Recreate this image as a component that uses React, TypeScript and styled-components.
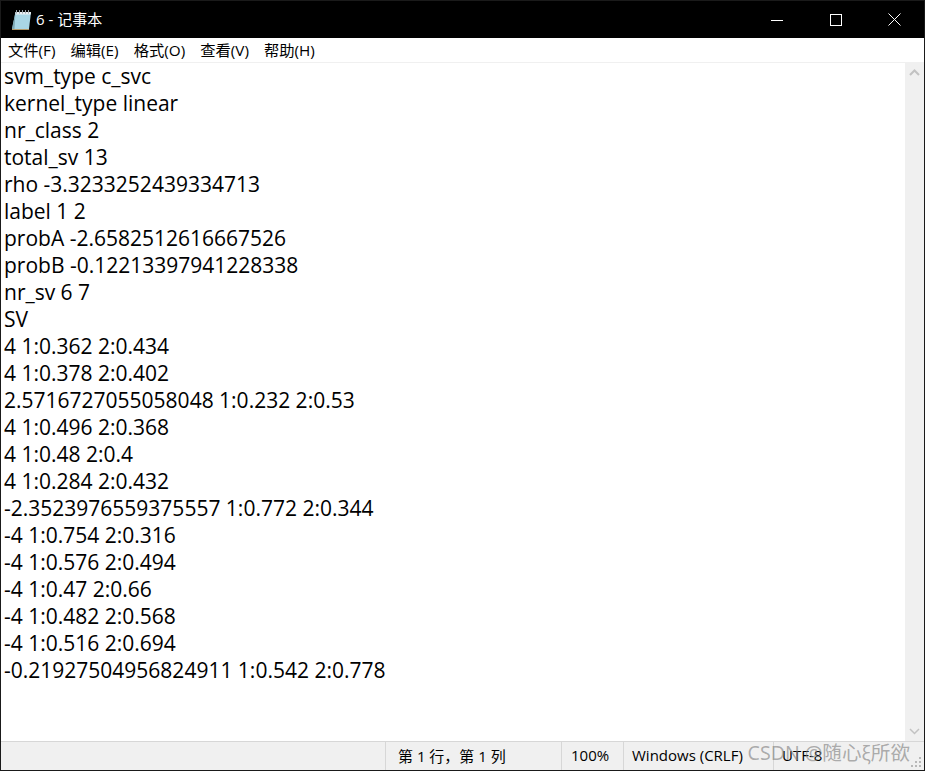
import { createGlobalStyle } from 'styled-components';
import styled from 'styled-components';

const GlobalStyle = createGlobalStyle`
  html, body {
    margin: 0;
    padding: 0;
    background: #fff;
  }
  #root {
    height: 771px;
  }
`;

const Win = styled.div`
  width: 925px;
  height: 771px;
  box-sizing: border-box;
  border: 1px solid #1a1a1a;
  display: flex;
  flex-direction: column;
  position: relative;
  overflow: hidden;
  font-family: "Open Sans", "Noto Sans CJK SC", sans-serif;
  color: #000;
`;

const TitleBar = styled.div`
  height: 37px;
  flex: none;
  background: #000;
  display: flex;
  align-items: center;
  padding-left: 10px;
  color: #fff;
  font-size: 15px;
`;

const TitleText = styled.span`
  margin-left: 4px;
  margin-top: -2px;
  flex: 1;
`;

const WinBtn = styled.div`
  width: 59px;
  height: 37px;
  display: flex;
  align-items: center;
  justify-content: center;
`;

const MenuBar = styled.div`
  height: 24px;
  flex: none;
  background: #fff;
  display: flex;
  align-items: center;
  padding-left: 7px;
  gap: 15px;
  font-size: 15.3px;
  border-bottom: 1px solid #f0f0f0;
`;

const MenuItem = styled.span`
  white-space: nowrap;
  margin-top: -2px;
`;

const Middle = styled.div`
  flex: 1;
  display: flex;
  min-height: 0;
`;

const TextArea = styled.div`
  flex: 1;
  padding: 0 0 0 3px;
  font-size: 21px;
  line-height: 27px;
  white-space: pre;
`;

const ScrollBar = styled.div`
  width: 19px;
  flex: none;
  background: #f0f0f0;
  display: flex;
  flex-direction: column;
  justify-content: space-between;
  align-items: center;
  padding: 6px 0;
  box-sizing: border-box;
`;

const StatusBar = styled.div`
  height: 29px;
  flex: none;
  box-sizing: border-box;
  background: #f0f0f0;
  border-top: 1px solid #d7d7d7;
  display: flex;
  justify-content: flex-end;
  font-size: 15px;
`;

const Pane = styled.div<{ $w: number; $pad: number }>`
  width: ${p => p.$w}px;
  box-sizing: border-box;
  border-left: 1px solid #d7d7d7;
  padding: 0 0 2px ${p => p.$pad}px;
  display: flex;
  align-items: center;
  white-space: nowrap;
`;

const Grip = styled.svg`
  position: absolute;
  right: 1px;
  bottom: 1px;
`;

const Watermark = styled.div`
  position: absolute;
  right: 14px;
  bottom: 3px;
  font-size: 19.6px;
  line-height: 28px;
  color: rgba(130, 130, 130, 0.65);
  white-space: nowrap;
`;

const lines = [
  'svm_type c_svc',
  'kernel_type linear',
  'nr_class 2',
  'total_sv 13',
  'rho -3.3233252439334713',
  'label 1 2',
  'probA -2.6582512616667526',
  'probB -0.12213397941228338',
  'nr_sv 6 7',
  'SV',
  '4 1:0.362 2:0.434',
  '4 1:0.378 2:0.402',
  '2.5716727055058048 1:0.232 2:0.53',
  '4 1:0.496 2:0.368',
  '4 1:0.48 2:0.4',
  '4 1:0.284 2:0.432',
  '-2.3523976559375557 1:0.772 2:0.344',
  '-4 1:0.754 2:0.316',
  '-4 1:0.576 2:0.494',
  '-4 1:0.47 2:0.66',
  '-4 1:0.482 2:0.568',
  '-4 1:0.516 2:0.694',
  '-0.21927504956824911 1:0.542 2:0.778',
];

const menus = ['文件(F)', '编辑(E)', '格式(O)', '查看(V)', '帮助(H)'];

function NotepadIcon() {
  return (
    <svg width="21" height="21" viewBox="0 0 21 21">
      <path d="M4.5 3 L20 3 L18 20 L1 20 Z" fill="#a9d6e5" />
      <path d="M1 20 L18 20 L18.2 21 L1 21 Z" fill="#b59a6a" />
      <path d="M4.5 3 L20 3 L19.7 5.5 L4.2 5.5 Z" fill="#e8eef2" />
      <path d="M4.5 3 L3.5 20 L1 20 Z" fill="#7fa9b5" />
      <path d="M5.5 1 V4.5 M8.5 1 V4.5 M11.5 1 V4.5 M14.5 1 V4.5 M17.5 1 V4.5" stroke="#9aa5ab" strokeWidth="1" />
    </svg>
  );
}

export default function App() {
  return (
    <>
      <GlobalStyle />
      <Win>
        <TitleBar>
          <NotepadIcon />
          <TitleText>6 - 记事本</TitleText>
          <WinBtn>
            <svg width="12" height="12" viewBox="0 0 12 12">
              <path d="M0 6.5 H12" stroke="#fff" strokeWidth="1" />
            </svg>
          </WinBtn>
          <WinBtn>
            <svg width="12" height="12" viewBox="0 0 12 12">
              <rect x="0.5" y="0.5" width="11" height="11" fill="none" stroke="#fff" strokeWidth="1" />
            </svg>
          </WinBtn>
          <WinBtn>
            <svg width="13" height="13" viewBox="0 0 13 13">
              <path d="M0.5 0.5 L12.5 12.5 M12.5 0.5 L0.5 12.5" stroke="#fff" strokeWidth="1" />
            </svg>
          </WinBtn>
        </TitleBar>
        <MenuBar>
          {menus.map(m => (
            <MenuItem key={m}>{m}</MenuItem>
          ))}
        </MenuBar>
        <Middle>
          <TextArea>{lines.join('\n')}</TextArea>
          <ScrollBar>
            <svg width="11" height="7" viewBox="0 0 11 7">
              <path d="M1 6 L5.5 1.5 L10 6" fill="none" stroke="#c2c2c2" strokeWidth="2" />
            </svg>
            <svg width="11" height="7" viewBox="0 0 11 7">
              <path d="M1 1 L5.5 5.5 L10 1" fill="none" stroke="#c2c2c2" strokeWidth="1.5" />
            </svg>
          </ScrollBar>
        </Middle>
        <StatusBar>
          <Pane $w={176} $pad={12}>第 1 行，第 1 列</Pane>
          <Pane $w={62} $pad={9}>100%</Pane>
          <Pane $w={150} $pad={8}>Windows (CRLF)</Pane>
          <Pane $w={151} $pad={8}>UTF-8</Pane>
        </StatusBar>
        <Grip width="12" height="12" viewBox="0 0 12 12">
          <g fill="#b8b8b8">
            <rect x="8" y="0" width="2" height="2" />
            <rect x="4" y="4" width="2" height="2" />
            <rect x="8" y="4" width="2" height="2" />
            <rect x="0" y="8" width="2" height="2" />
            <rect x="4" y="8" width="2" height="2" />
            <rect x="8" y="8" width="2" height="2" />
          </g>
        </Grip>
        <Watermark>CSDN @随心ξ所欲</Watermark>
      </Win>
    </>
  );
}
